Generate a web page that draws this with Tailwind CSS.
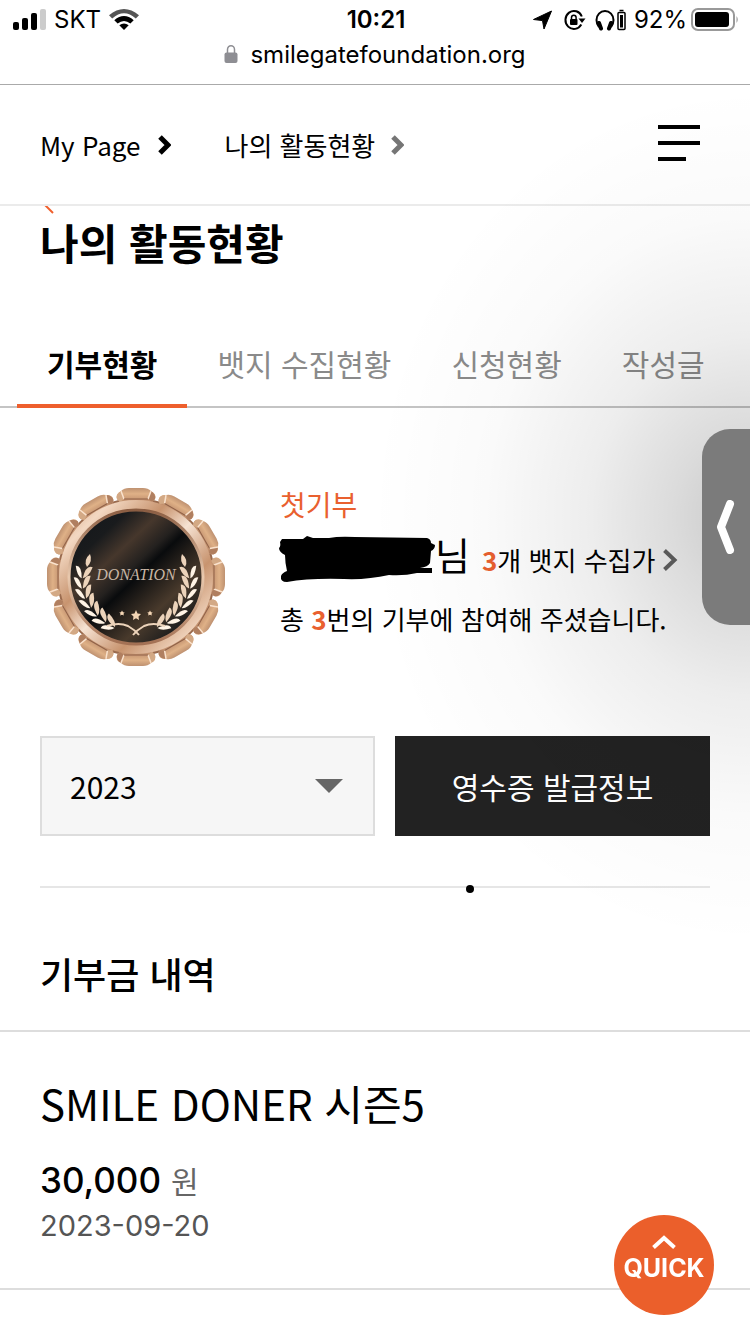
<!DOCTYPE html>
<html lang="ko">
<head>
  <meta charset="UTF-8">
  <meta name="viewport" content="width=device-width, initial-scale=1.0">
  <title>나의 활동현황</title>
  <!-- Tailwind CSS CDN -->
  <script src="https://cdn.jsdelivr.net/npm/@tailwindcss/browser@4"></script>
</head>
<body class="relative min-h-screen overflow-x-hidden bg-white text-black font-['Noto_Sans_CJK_KR',sans-serif]">
  <!-- Status bar and address -->
  <div class="border-b border-[#aaaaaa] font-[Inter,sans-serif] text-2xl">
    <div class="grid h-10 grid-cols-[1fr_auto_1fr] items-center pl-[13px] pr-[11px]">
      <div class="flex items-center gap-2">
        <svg class="h-[22px] w-[33px]" viewBox="0 0 33 22">
          <rect x="0" y="13" width="6" height="8" rx="2" />
          <rect x="9" y="9" width="6" height="12" rx="2" />
          <rect x="18" y="4" width="6" height="17" rx="2" />
          <rect x="27" y="0" width="6" height="21" rx="2" fill="#cccccc" />
        </svg>
        <span>SKT</span>
        <svg class="h-[22px] w-[30px]" viewBox="0 0 30 22">
          <path d="M0 6.300Q15-6.300 30 6.300L26.800 9.500Q15-0.800 3.200 9.500z" fill="#555555" />
          <path d="M5.300 11.200Q15 3 24.700 11.200L21.400 14.500Q15 9.300 8.600 14.500z" />
          <path d="M10.300 16.200Q15 12.600 19.700 16.200L15 21z" />
        </svg>
      </div>
      <span class="font-semibold">10:21</span>
      <div class="flex items-center justify-end">
        <svg class="mr-3 h-5 w-[19px]" viewBox="0 0 19 20"><path d="M18.500 1L11 19L9.500 10.600L0.500 9.500z" stroke="#000" stroke-width="1" stroke-linejoin="round" /></svg>
        <svg class="mr-2 h-[22px] w-[23px]" viewBox="0 0 23 22" fill="none" stroke="#000" stroke-width="2">
          <path d="M17.300 15.500A8.500 9 0 1 1 17.800 7.500" />
          <path d="M14.500 9.500H21.500L18 14z" fill="#000" stroke="none" />
          <rect x="6" y="10" width="7.500" height="6" rx="1" fill="#000" stroke="none" />
          <path d="M7.500 10.500V8.500a2.300 2.300 0 0 1 4.600 0V10.500" stroke-width="1.500" />
        </svg>
        <svg class="mr-2 h-[22px] w-[31px]" viewBox="0 0 31 22" fill="none" stroke="#000" stroke-width="2">
          <path d="M4 18Q1.500 15 1.500 11a8.500 9 0 0 1 17 0Q18.500 15 16 18" />
          <path d="M4 14L6 19.500M16 14L14 19.500" stroke-width="4" stroke-linecap="round" />
          <rect x="23" y="3.500" width="7" height="17" rx="1" stroke-width="1.500" />
          <path d="M24.500 1.500H28.500" stroke-width="1.500" />
          <rect x="25" y="6" width="3" height="12.500" fill="#000" stroke="none" />
        </svg>
        <span class="mr-1">92%</span>
        <svg class="h-6 w-12" viewBox="0 0 48 24">
          <rect x="1" y="1" width="42" height="21" rx="6" fill="none" stroke="#999999" stroke-width="2" />
          <rect x="4" y="4" width="34" height="15" rx="3" />
          <path d="M45.500 8Q48 11.500 45.500 15z" fill="#999999" />
        </svg>
      </div>
    </div>
    <div class="flex h-11 items-start justify-center gap-3">
      <svg class="mt-1 h-5 w-[14px]" viewBox="0 0 14 20">
        <path d="M3.500 10V5.500a3.500 3.800 0 0 1 7 0V10" fill="none" stroke="#8e8e93" stroke-width="1.500" />
        <rect x="0.500" y="8.500" width="13" height="10.500" rx="2" fill="#8e8e93" />
      </svg>
      <span class="leading-[30px]">smilegatefoundation.org</span>
    </div>
  </div>

  <!-- Site header -->
  <header class="flex h-[121px] items-center justify-between border-b-2 border-[#ebebeb] px-10">
    <nav class="flex items-center text-[26px] leading-10">
      <a href="#" class="flex items-center gap-[18px]">My Page
        <svg class="h-5 w-[13px]" viewBox="0 0 13 20" fill="none" stroke="#000" stroke-width="5"><path d="M2 2L10 10L2 18" /></svg>
      </a>
      <a href="#" class="ml-[53px] flex items-center gap-4">나의 활동현황
        <svg class="h-5 w-[13px]" viewBox="0 0 13 20" fill="none" stroke="#757575" stroke-width="5"><path d="M2 2L10 10L2 18" /></svg>
      </a>
    </nav>
    <button type="button" aria-label="메뉴" class="mr-[10px] pb-1">
      <svg class="h-9 w-[42px]" viewBox="0 0 42 36"><path d="M0 0h42v4H0zM0 16h42v4H0zM0 32h28v4H0z" /></svg>
    </button>
  </header>

  <main>
    <div class="relative h-[116px] px-10 pt-[6px]">
      <svg class="absolute left-11 top-0 h-2 w-3" viewBox="0 0 12 8"><path d="M0.500 -1.500L9 7" stroke="#f05f2c" stroke-width="2" /></svg>
      <h1 class="text-[42px] font-bold leading-[60px]">나의 활동현황</h1>
    </div>

    <!-- Tabs -->
    <nav class="flex h-[86px] border-b-2 border-[#c4c4c4] pl-[17px] text-[30px] text-[#8a8a8a]">
      <a href="#" class="-mb-[2px] flex items-center border-b-4 border-[#ee5f2d] px-[30px] font-bold text-black">기부현황</a>
      <a href="#" class="flex items-center px-[30px] pb-[2px]">뱃지 수집현황</a>
      <a href="#" class="flex items-center px-[30px] pb-[2px]">신청현황</a>
      <a href="#" class="flex items-center px-[30px] pb-[2px]">작성글</a>
    </nav>

    <!-- Donor profile -->
    <section class="flex items-start gap-[54px] pb-[69px] pl-[46px] pt-[79px]">
      <svg class="size-[180px] shrink-0" viewBox="-90 -90 180 180" role="img" aria-label="Donation badge">
        <defs>
          <linearGradient id="lobe" x1="0" y1="-90" x2="0" y2="-73" gradientUnits="userSpaceOnUse">
            <stop offset="0" stop-color="#b98c6d" />
            <stop offset=".4" stop-color="#dfb187" />
            <stop offset="1" stop-color="#b58263" />
          </linearGradient>
          <linearGradient id="ring" x1="0" y1="0" x2="1" y2="1">
            <stop offset="0" stop-color="#d5a482" />
            <stop offset=".15" stop-color="#f3d8c2" />
            <stop offset=".35" stop-color="#c8946f" />
            <stop offset=".5" stop-color="#f6e2d2" />
            <stop offset=".7" stop-color="#c8946f" />
            <stop offset=".9" stop-color="#f3d8c2" />
            <stop offset="1" stop-color="#c9966f" />
          </linearGradient>
          <linearGradient id="rim" x1="0" y1="0" x2="0" y2="1">
            <stop offset="0" stop-color="#8b5d42" />
            <stop offset=".5" stop-color="#e9c9ae" />
            <stop offset="1" stop-color="#a37053" />
          </linearGradient>
          <linearGradient id="face" x1=".1" y1=".1" x2=".85" y2=".9">
            <stop offset="0" stop-color="#15181b" />
            <stop offset=".15" stop-color="#191b1d" />
            <stop offset=".31" stop-color="#46372c" />
            <stop offset=".45" stop-color="#24211f" />
            <stop offset=".52" stop-color="#090b0d" />
            <stop offset=".78" stop-color="#493a2c" />
            <stop offset="1" stop-color="#17191b" />
          </linearGradient>
          <g id="tooth">
            <path d="M-16 -74L-19 -78Q-21 -83 -15 -86Q-12 -89 -7 -89H7Q12 -89 15 -86Q21 -83 19 -78L16 -74z" fill="url(#lobe)" />
            <path d="M-15 -86L-12 -78L-16 -75L-19 -78Q-20 -83 -15 -86z" fill="#d3a985" />
            <path d="M15 -86L12 -78L16 -75L19 -78Q20 -83 15 -86z" fill="#b07f60" />
            <path d="M-15 -86L-12 -78M15 -86L12 -78" stroke="#fae2cd" stroke-width="1.500" />
            <path d="M-12 -78H12" stroke="#8f6148" stroke-width="1" />
          </g>
          <g id="leaf" fill="#ecd3ba">
            <path d="M6 0Q4 -6 -6 -9Q-8 -2 6 0z" />
            <path d="M6 1Q4 6 -6 8Q-7 2 6 1z" fill="#fff4e6" />
          </g>
          <g id="branch">
            <use href="#leaf" transform="rotate(29) translate(0 54)" />
            <use href="#leaf" transform="rotate(40) translate(0 54)" />
            <use href="#leaf" transform="rotate(51) translate(0 54)" />
            <use href="#leaf" transform="rotate(62) translate(0 54)" />
            <use href="#leaf" transform="rotate(73) translate(0 54)" />
            <use href="#leaf" transform="rotate(84) translate(0 54)" />
            <use href="#leaf" transform="rotate(95) translate(0 53)" />
            <path d="M-49 -10Q-53 -17 -46 -23Q-43 -16 -49 -10z" fill="#ecd3ba" />
            <path d="M-29 49Q-17 45 -8 49Q-1 53 3 58" fill="none" stroke="#ecd3ba" stroke-width="2" />
          </g>
        </defs>
        <circle r="79" fill="#9a6b4e" />
        <use href="#tooth" />
        <use href="#tooth" transform="rotate(30)" />
        <use href="#tooth" transform="rotate(60)" />
        <use href="#tooth" transform="rotate(90)" />
        <use href="#tooth" transform="rotate(120)" />
        <use href="#tooth" transform="rotate(150)" />
        <use href="#tooth" transform="rotate(180)" />
        <use href="#tooth" transform="rotate(210)" />
        <use href="#tooth" transform="rotate(240)" />
        <use href="#tooth" transform="rotate(270)" />
        <use href="#tooth" transform="rotate(300)" />
        <use href="#tooth" transform="rotate(330)" />
        <circle r="72" fill="none" stroke="url(#ring)" stroke-width="10" />
        <circle r="67" fill="url(#face)" stroke="url(#rim)" stroke-width="3" />
        <use href="#branch" />
        <use href="#branch" transform="scale(-1 1)" />
        <path d="M0 33L1.500 36.500L5 37L2.500 39.500L3 43L0 41.200L-3 43L-2.500 39.500L-5 37L-1.500 36.500z" fill="#f3d5b5" />
        <path d="M-14 33.500l1 1.700 1.700.3-1.200 1.300.3 1.700-1.800-.8-1.800.8.300-1.700-1.200-1.300 1.700-.3zM14 33.500l1 1.700 1.700.3-1.200 1.300.3 1.700-1.800-.8-1.800.8.300-1.700-1.200-1.300 1.700-.3z" fill="#f3d5b5" />
        <text y="3" text-anchor="middle" font-family="Liberation Serif, serif" font-size="16" font-style="italic" fill="#c8b5a4">DONATION</text>
      </svg>
      <div class="text-[26px] leading-10">
        <p class="text-[28px] leading-[34px] text-[#e9602f]">첫기부</p>
        <div class="mt-[9px] flex items-center">
          <svg class="-ml-px h-[60px] w-[156px]" viewBox="0 0 156 60" role="img" aria-label="이름">
            <path d="M3 9L24 9L28 6L34 8L50 8Q60 6 76 7L148 8Q152 9 152 13L156 15Q156 19 152 21L151 33Q149 37 141 38L153 38V43H138Q125 46 110 45Q88 50 65 49Q30 48 8 52Q1 52 2 46Q3 43 8 41Q6 32 6 25Q0 22 0 18Q2 16 1 12z" />
          </svg>
          <span class="self-start text-[38px] leading-[48px]">님</span>
          <a href="#" class="ml-3 flex items-center"><span><strong class="text-[#e9602f]">3</strong>개 뱃지 수집가</span>
            <svg class="ml-2 h-[22px] w-[15px]" viewBox="0 0 15 22" fill="none" stroke="#666666" stroke-width="4"><path d="M1.500 1.500L11.500 11L1.500 20.500" /></svg>
          </a>
        </div>
        <p class="mt-[9px]">총 <strong class="text-[#e9602f]">3</strong>번의 기부에 참여해 주셨습니다.</p>
      </div>
    </section>

    <div class="mx-10 border-b-2 border-[#e6e6e6] pb-[50px]">
      <form class="flex h-[100px] gap-5 text-[30px]">
        <div class="relative w-1/2">
          <select aria-label="연도" class="size-full appearance-none border-2 border-[#dddddd] bg-[#f6f6f6] px-7">
            <option>2023</option>
          </select>
          <svg class="pointer-events-none absolute right-8 top-[43px] h-[14px] w-7" viewBox="0 0 28 14"><path d="M0 0H28L14 14z" fill="#666666" /></svg>
        </div>
        <button type="button" class="flex-1 bg-[#222222] text-white">영수증 발급정보</button>
      </form>
    </div>

    <!-- Donation history -->
    <section class="relative">
      <span class="absolute left-[466px] -top-[3px] size-2 rounded-full bg-black"></span>
      <h2 class="border-b-2 border-[#dddddd] px-10 pb-[26px] pt-[54px] text-[36px] font-medium leading-[62px]">기부금 내역</h2>
      <article class="border-b-2 border-[#dddddd] px-10 pb-10 pt-10">
        <h3 class="text-[42px] leading-[62px]">SMILE DONER 시즌5</h3>
        <p class="mt-[22px] flex items-center gap-[10px] leading-[48px]">
          <span class="font-[Inter,sans-serif] text-[35px] font-medium">30,000</span>
          <span class="text-[30px] text-[#666666]">원</span>
        </p>
        <p class="font-[Inter,sans-serif] text-[29px] leading-[44px] text-[#555555]">2023-09-20</p>
      </article>
    </section>
  </main>

  <!-- Side panel handle with its shade -->
  <div class="pointer-events-none absolute right-0 top-[86px] h-[900px] w-[400px] bg-[radial-gradient(380px_430px_at_100%_430px,rgb(0_0_0/0.22),rgb(0_0_0/0.14)_20%,rgb(0_0_0/0.07)_42%,rgb(0_0_0/0.02)_70%,transparent)]"></div>
  <button type="button" aria-label="열기" class="fixed right-0 top-[429px] flex h-[196px] w-12 items-center justify-center rounded-l-[28px] bg-[#7b7b7b]">
    <svg class="h-[54px] w-[18px]" viewBox="0 0 18 54" fill="none" stroke="#fff" stroke-width="8" stroke-linecap="round" stroke-linejoin="round"><path d="M13 4L4 27L13 50" /></svg>
  </button>

  <a href="#" class="fixed bottom-[5px] right-9 flex size-[100px] flex-col items-center rounded-full bg-[#eb5f2b] pt-5 font-[Inter,sans-serif] text-[25px] font-bold leading-8 text-white">
    <svg class="mb-[3px] h-[14px] w-6" viewBox="0 0 24 14" fill="none" stroke="#fff" stroke-width="4"><path d="M1.500 12.500L12 3L22.500 12.500" /></svg>
    QUICK
  </a>
</body>
</html>
